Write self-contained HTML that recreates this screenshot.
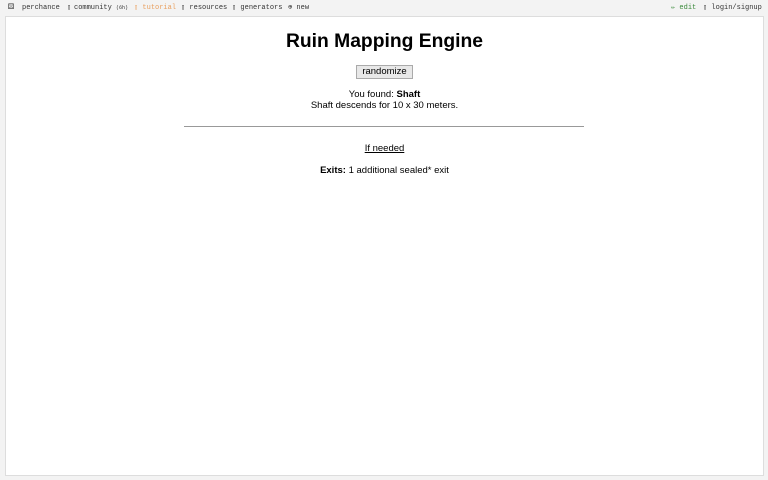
<!DOCTYPE html>
<html><head><style>
body{margin:0;width:768px;height:480px;background:#f3f3f3;font-family:"Liberation Sans",sans-serif;position:relative;overflow:hidden}
.bar{position:absolute;top:0;left:0;right:0;height:16px;font-family:"Liberation Mono",monospace;font-size:7px;color:#333;line-height:17px}
.bar span{position:absolute;top:0;white-space:nowrap}
.main{position:absolute;left:5px;top:16px;width:757px;height:458px;background:#fff;border:1px solid #ddd;text-align:center;color:#000}
h1{font-size:19.3px;margin:0;position:absolute;top:14px;width:100%}
.btn{position:absolute;left:350px;top:48px;width:55px;height:12px;background:#e8e8e8;border:1px solid #aaa;font-size:9.5px;line-height:12px}
.t{position:absolute;width:100%;font-size:9.5px}
hr{position:absolute;left:178px;top:109px;width:400px;margin:0;border:0;border-top:1px solid #999}
</style></head><body>
<div class="bar">
<span style="left:8px;font-size:10px;line-height:16px">⚄</span>
<span style="left:22px">perchance</span>
<span style="left:67px">▯</span>
<span style="left:74px">community <small style="font-size:5px">(6h)</small></span>
<span style="left:134px;color:#e9a060">▯ tutorial</span>
<span style="left:181px">▯ resources</span>
<span style="left:232px">▯ generators</span>
<span style="left:288px">⊕ new</span>
<span style="left:671px;color:#3a8a3a">✏ edit</span>
<span style="left:703px">▯ login/signup</span>
</div>
<div class="main">
<h1>Ruin Mapping Engine</h1>
<div class="btn">randomize</div>
<div class="t" style="top:72px">You found: <b>Shaft</b></div>
<div class="t" style="top:83px">Shaft descends for 10 x 30 meters.</div>
<hr>
<div class="t" style="top:126px"><u>If needed</u></div>
<div class="t" style="top:148px"><b>Exits:</b> 1 additional sealed* exit</div>
</div>
</body></html>
